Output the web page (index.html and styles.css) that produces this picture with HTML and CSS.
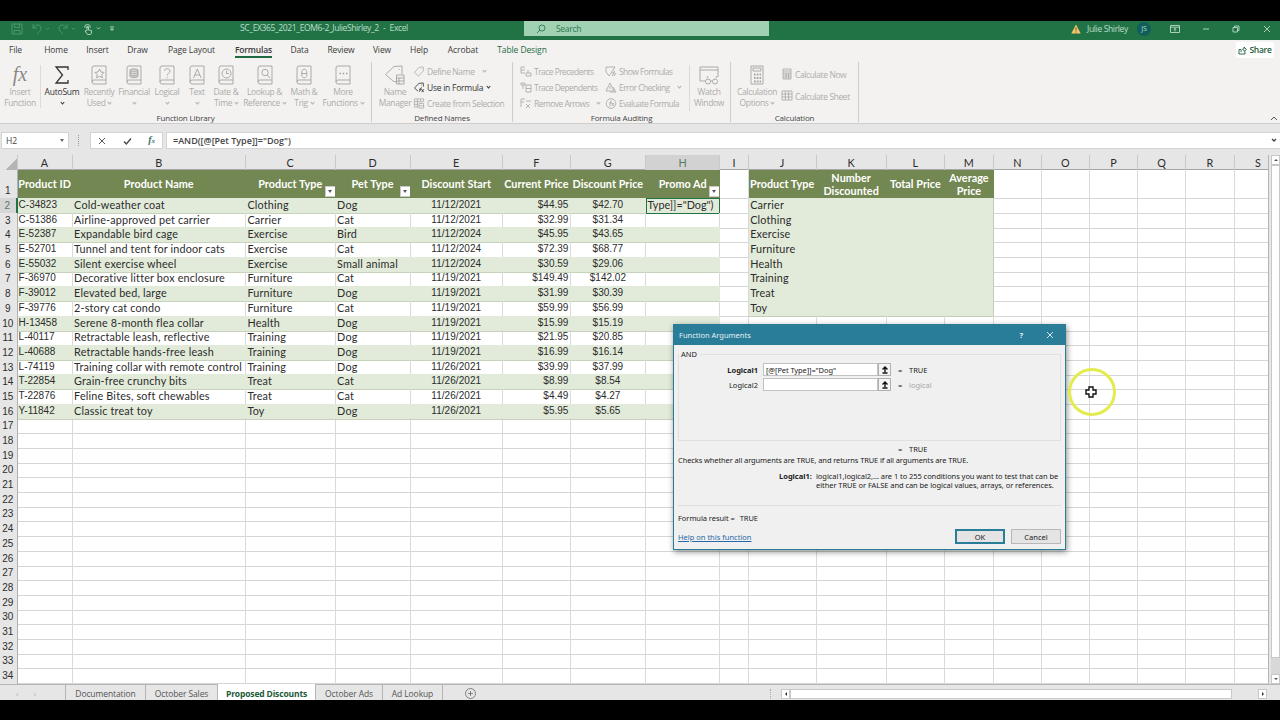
FILE: index.html
```html
<!DOCTYPE html>
<html lang="en">
<head>
  <meta charset="UTF-8" />
  <title>SC_EX365_2021_EOM6-2_JulieShirley_2 - Excel</title>
  <link rel="stylesheet" href="styles.css">
</head>
<body>
  <!-- shared icon shapes -->
  <svg class="defs" width="0" height="0">
    <symbol id="book" viewBox="0 0 16 20"><path d="M3 1h12v18H3a2 2 0 0 1-2-2V3a2 2 0 0 1 2-2zM1 17a2 2 0 0 1 2-2h12"/></symbol>
    <symbol id="tag" viewBox="0 0 12 12"><path d="M1 7l5-5.5 4.5-.5.5 4-5.500 6zM8.500 3.300h.5"/></symbol>
    <symbol id="sheet" viewBox="0 0 12 12"><path d="M1 1h10v9H1zM1 4h10M1 7h10M4.300 1v9M7.600 1v9"/></symbol>
    <symbol id="up" viewBox="0 0 8 8"><path d="M4 1v5M1.500 3.500L4 1l2.500 2.500M1.500 7h5"/></symbol>
  </svg>

  <div class="window">
    <header class="titlebar">
      <div class="quick">
        <svg width="12" height="12" viewBox="0 0 12 12"><path d="M1 1h10v10H1zM3.500 1v3.500h5V1M3 11V7.500h6V11"/></svg>
        <svg width="20" height="12" viewBox="0 0 20 12"><path d="M2 1v4h4M2 5c2-4 8-4 8 0 0 3-2 4-4 6M15 5l1.500 1.500L18 5"/></svg>
        <svg width="20" height="12" viewBox="0 0 20 12"><path d="M10 1v4H6M10 5C8 1 2 1 2 5c0 3 2 4 4 6M15 5l1.500 1.500L18 5"/></svg>
        <svg class="bright" width="20" height="12" viewBox="0 0 20 12"><path d="M1.500 4.500a3 3 0 1 1 6 0M3 5a1.500 1.500 0 1 1 3 0M4 7.500V4h1.500v3l3 .5V10l-1 1.500H4.500L2 8zM14 4.500L15.500 6 17 4.500"/></svg>
        <svg class="bright" width="8" height="12" viewBox="0 0 8 12"><path d="M1 4h4M1.500 6L3 7.500 4.500 6z"/></svg>
      </div>
      <div class="doc-name">SC_EX365_2021_EOM6-2_JulieShirley_2 &nbsp;-&nbsp; Excel</div>
      <div class="search">
        <svg width="10" height="10" viewBox="0 0 10 10"><circle cx="6" cy="4" r="3"/><path d="M4 6L1 9"/></svg>
        <span>Search</span>
      </div>
      <div class="account">
        <svg class="warn" width="10" height="10" viewBox="0 0 10 10"><path class="tri" d="M5 .5L9.700 9.500H.3z"/><path class="mark" d="M5 3.500v3M5 7.500v1"/></svg>
        <span class="user">Julie Shirley</span>
        <span class="avatar">JS</span>
        <svg class="w1" width="10" height="8" viewBox="0 0 10 8"><path d="M.5.5h9v7h-9zM.5 2.200h9M5 6.500V3.500M3.700 4.700L5 3.500l1.300 1.200"/></svg>
        <svg class="w2" width="8" height="8" viewBox="0 0 8 8"><path d="M1 4h6"/></svg>
        <svg class="w3" width="8" height="8" viewBox="0 0 8 8"><path d="M1 2.500h4.500V7H1zM2.500 2.500V1H7v4.500H5.500"/></svg>
        <svg class="w4" width="8" height="8" viewBox="0 0 8 8"><path d="M1 1l6 6M7 1L1 7"/></svg>
      </div>
    </header>

    <nav class="tabs">
      <a>File</a><a>Home</a><a>Insert</a><a>Draw</a><a>Page Layout</a><a class="active"><span>Formulas</span></a>
      <a>Data</a><a>Review</a><a>View</a><a>Help</a><a>Acrobat</a><a class="design">Table Design</a>
      <button class="share"><svg width="9" height="9" viewBox="0 0 9 9"><path d="M3 3.500H1v4.500h6V5.500M3 6c0-2 1-3 3-3V1l2.500 2.500L6 5.500V4"/></svg>Share</button>
    </nav>

    <section class="ribbon">
      <div class="group library">
        <div class="tools">
          <div class="big"><i class="fx">fx</i><span>Insert<br>Function</span></div>
          <div class="big on"><svg width="16" height="20" viewBox="0 0 16 20"><path class="thick" d="M14 5V2H2l6.500 8L2 18h12v-3"/></svg><span>AutoSum<br><b class="chev"></b></span></div>
          <div class="big"><svg width="16" height="20"><use href="#book"/><path d="M8.500 4l1.500 3 3 .4-2.200 2.200.6 3.200-2.900-1.500-2.900 1.500.6-3.200L4 7.400 7 7z"/></svg><span>Recently<br>Used <b class="chev"></b></span></div>
          <div class="big"><svg width="16" height="20"><use href="#book"/><path class="coins" d="M4 5c0-1.500 8-1.500 8 0v6.500c0 1.500-8 1.500-8 0zM4 5c0 1.500 8 1.500 8 0M4 7.200c0 1.500 8 1.500 8 0M4 9.400c0 1.500 8 1.500 8 0"/></svg><span>Financial<br><b class="chev"></b></span></div>
          <div class="big"><svg width="16" height="20"><use href="#book"/><path d="M5.500 6c0-3 5.500-3 5.500 0 0 2.500-2.800 2-2.800 4.500M8.200 12v1.200"/></svg><span>Logical<br><b class="chev"></b></span></div>
          <div class="big"><svg width="16" height="20"><use href="#book"/><path d="M4.500 13L8.300 4l3.800 9M5.800 10h5"/></svg><span>Text<br><b class="chev"></b></span></div>
          <div class="big"><svg width="16" height="20"><use href="#book"/><circle cx="8.500" cy="8.500" r="4.500"/><path d="M8.500 5.500v3H11"/></svg><span>Date &amp;<br>Time <b class="chev"></b></span></div>
          <div class="big"><svg width="16" height="20"><use href="#book"/><circle cx="8" cy="7.500" r="3.200"/><path d="M10.300 10l2.700 3"/></svg><span>Lookup &amp;<br>Reference <b class="chev"></b></span></div>
          <div class="big"><svg width="16" height="20"><use href="#book"/><ellipse cx="8.300" cy="8.500" rx="2.600" ry="4.300"/><path d="M5.700 8.500h5.200"/></svg><span>Math &amp;<br>Trig <b class="chev"></b></span></div>
          <div class="big"><svg width="16" height="20"><use href="#book"/><path class="thick" d="M4.500 8.500H6M7.700 8.500h1.500M11 8.500h1.500"/></svg><span>More<br>Functions <b class="chev"></b></span></div>
        </div>
        <h6>Function Library</h6>
      </div>

      <div class="group names">
        <div class="tools">
          <div class="big"><svg width="22" height="20" viewBox="0 0 22 20"><path d="M12 17l-3-1L1.500 9.500 10 1.500l8-.5v8M15 4v1M12.500 10H20v9h-7.500zM12.500 13H20M12.500 16H20M15 13v6"/></svg><span>Name<br>Manager</span></div>
          <div class="smalls">
            <div><svg width="12" height="11"><use href="#tag"/></svg>Define Name <b class="chev far"></b></div>
            <div class="on"><svg width="12" height="11" viewBox="0 0 12 12"><path d="M5 10L1 6.500 6 1.500 10.500 1l.5 4M8.500 3.300h.5M6 10.500c2 0 1-4.500 3-4.500M6 8h3M9 11l2-3M9 8l2 3"/></svg>Use in Formula <b class="chev"></b></div>
            <div><svg width="12" height="11" viewBox="0 0 12 12"><path d="M5 10H1V1h10v3M1 4h10M1 7h4M4.300 1v9M7.600 1v3M6 6h5v5H6zM6 8.500h5"/></svg>Create from Selection</div>
          </div>
        </div>
        <h6>Defined Names</h6>
      </div>

      <div class="group auditing">
        <div class="tools">
          <div class="smalls trace">
            <div><svg width="12" height="11" viewBox="0 0 12 11"><path d="M5 1H1v6h4M1 4h4M6 7h5v3H6zM8 4v3"/></svg>Trace Precedents</div>
            <div><svg width="12" height="11" viewBox="0 0 12 11"><path d="M1 1h4v2H1zM6 3h5v7H6zM6 6.500h5M3 3v4"/></svg>Trace Dependents</div>
            <div><svg width="12" height="11" viewBox="0 0 12 11"><path d="M1 9V1h4M1 4h3M6 3h5M6 6l4 4M10 6l-4 4"/></svg>Remove Arrows <b class="chev far"></b></div>
          </div>
          <div class="smalls">
            <div><svg width="12" height="11" viewBox="0 0 12 11"><path d="M1 6V1h9L4 10 1 6M7 10c2 0 1-5 3-5M7 7h3M9 10l2-3"/></svg>Show Formulas</div>
            <div><svg width="12" height="11" viewBox="0 0 12 11"><path d="M5 1l4 8H1zM5 4v3M8 5l3 5H5"/></svg>Error Checking <b class="chev far"></b></div>
            <div><svg width="12" height="11" viewBox="0 0 12 11"><circle cx="6" cy="5.500" r="4.800"/><path d="M4 8.500c1.500 0 1-6 3-6M4 5h3M6.500 8l2.500-3M7 5l2 3"/></svg>Evaluate Formula</div>
          </div>
          <div class="big watch"><svg width="20" height="20" viewBox="0 0 20 20"><path d="M7 16H1V2h18v10M1 5h18"/><circle cx="9" cy="16.500" r="2.500"/><circle cx="16" cy="16.500" r="2.500"/><path d="M11.500 16h2M8 13l1-2M17 13l1-2"/></svg><span>Watch<br>Window</span></div>
        </div>
        <h6>Formula Auditing</h6>
      </div>

      <div class="group calc">
        <div class="tools">
          <div class="big"><svg width="14" height="20" viewBox="0 0 14 20"><path d="M1 1h12v18H1zM3 3h8v3H3z"/><path class="dots" d="M4 9.500h7M4 13h7M4 16.500h7"/></svg><span>Calculation<br>Options <b class="chev"></b></span></div>
          <div class="smalls two">
            <div><svg width="12" height="12" viewBox="0 0 12 12"><path d="M2 1h8v10H2zM2 3h8M2 5h8M2 7h8M2 9h8M5 5v6M7.500 5v6"/></svg>Calculate Now</div>
            <div><svg width="12" height="12"><use href="#sheet"/></svg>Calculate Sheet</div>
          </div>
        </div>
        <h6>Calculation</h6>
      </div>
      <svg class="collapse" width="8" height="5" viewBox="0 0 8 5"><path d="M1 4l3-3 3 3"/></svg>
    </section>

    <div class="formula-bar">
      <div class="name-box">H2<b class="arrow"></b></div>
      <div class="grip"></div>
      <div class="entry">
        <svg width="8" height="8" viewBox="0 0 8 8"><path d="M1 1l6 6M7 1L1 7"/></svg>
        <svg width="9" height="8" viewBox="0 0 9 8"><path class="thick" d="M1 4.500L3.300 7 8 1.500"/></svg>
        <i>f<small>x</small></i>
      </div>
      <div class="formula">=AND([@[Pet Type]]="Dog")<svg width="6" height="5" viewBox="0 0 6 5"><path class="thick" d="M1 1l2 2 2-2"/></svg></div>
    </div>

    <main class="sheet">
      <div class="grid" id="grid"></div>
      <div class="vscroll"><b class="btn-up"></b><span></span><b class="btn-down"></b></div>
    </main>

    <footer class="sheet-tabs">
      <div class="nav-arrows"><span>‹</span><span>›</span></div>
      <a>Documentation</a><a>October Sales</a><a class="active">Proposed Discounts</a><a>October Ads</a><a>Ad Lookup</a>
      <svg class="add" width="11" height="11" viewBox="0 0 11 11"><circle cx="5.500" cy="5.500" r="5"/><path d="M5.500 3v5M3 5.500h5"/></svg>
      <div class="hscroll"><b class="btn-left"></b><span></span><b class="btn-right"></b></div>
    </footer>
  </div>

  <div class="dialog">
    <div class="dialog-title"><span>Function Arguments</span><b>?</b>
      <svg width="8" height="8" viewBox="0 0 8 8"><path d="M1 1l6 6M7 1L1 7"/></svg>
    </div>
    <div class="dialog-body">
      <fieldset>
        <legend>AND</legend>
        <div class="arg"><label class="strong">Logical1</label><div class="field">[@[Pet Type]]="Dog"</div><button><svg width="8" height="8"><use href="#up"/></svg></button><em>=</em><span>TRUE</span></div>
        <div class="arg"><label>Logical2</label><div class="field"></div><button><svg width="8" height="8"><use href="#up"/></svg></button><em>=</em><span class="hint">logical</span></div>
      </fieldset>
      <div class="result"><em>=</em><span>TRUE</span></div>
      <p class="about">Checks whether all arguments are TRUE, and returns TRUE if all arguments are TRUE.</p>
      <div class="help"><strong>Logical1:</strong><p>logical1,logical2,... are 1 to 255 conditions you want to test that can be<br>either TRUE or FALSE and can be logical values, arrays, or references.</p></div>
      <div class="final">Formula result = <span>TRUE</span></div>
      <div class="actions"><a>Help on this function</a><button class="ok">OK</button><button>Cancel</button></div>
    </div>
  </div>

  <svg class="pointer" width="50" height="50" viewBox="0 0 50 50">
    <circle cx="25" cy="25" r="22.500"/>
    <path d="M22 20h4v3h3v4h-3v3h-4v-3h-3v-4h3z"/>
  </svg>

  <script>
    const cols = 'ABCDEFGHIJKLMNOPQRS'.split('');
    const heads = {
      A: 'Product ID', B: 'Product Name', C: 'Product Type', D: 'Pet Type', E: 'Discount Start',
      F: 'Current Price', G: 'Discount Price', H: 'Promo Ad',
      J: 'Product Type', K: 'Number<br>Discounted', L: 'Total Price', M: 'Average<br>Price'
    };
    const products = [
      ['C-34823', 'Cold-weather coat', 'Clothing', 'Dog', '11/12/2021', '$44.95', '$42.70', 'Type]]="Dog")'],
      ['C-51386', 'Airline-approved pet carrier', 'Carrier', 'Cat', '11/12/2021', '$32.99', '$31.34'],
      ['E-52387', 'Expandable bird cage', 'Exercise', 'Bird', '11/12/2024', '$45.95', '$43.65'],
      ['E-52701', 'Tunnel and tent for indoor cats', 'Exercise', 'Cat', '11/12/2024', '$72.39', '$68.77'],
      ['E-55032', 'Silent exercise wheel', 'Exercise', 'Small animal', '11/12/2024', '$30.59', '$29.06'],
      ['F-36970', 'Decorative litter box enclosure', 'Furniture', 'Cat', '11/19/2021', '$149.49', '$142.02'],
      ['F-39012', 'Elevated bed, large', 'Furniture', 'Dog', '11/19/2021', '$31.99', '$30.39'],
      ['F-39776', '2-story cat condo', 'Furniture', 'Cat', '11/19/2021', '$59.99', '$56.99'],
      ['H-13458', 'Serene 8-month flea collar', 'Health', 'Dog', '11/19/2021', '$15.99', '$15.19'],
      ['L-40117', 'Retractable leash, reflective', 'Training', 'Dog', '11/19/2021', '$21.95', '$20.85'],
      ['L-40688', 'Retractable hands-free leash', 'Training', 'Dog', '11/19/2021', '$16.99', '$16.14'],
      ['L-74119', 'Training collar with remote control', 'Training', 'Dog', '11/26/2021', '$39.99', '$37.99'],
      ['T-22854', 'Grain-free crunchy bits', 'Treat', 'Cat', '11/26/2021', '$8.99', '$8.54'],
      ['T-22876', 'Feline Bites, soft chewables', 'Treat', 'Cat', '11/26/2021', '$4.49', '$4.27'],
      ['Y-11842', 'Classic treat toy', 'Toy', 'Dog', '11/26/2021', '$5.95', '$5.65']
    ];
    const types = ['Carrier', 'Clothing', 'Exercise', 'Furniture', 'Health', 'Training', 'Treat', 'Toy'];

    let html = '<div class="row letters"><div class="corner"></div>';
    cols.forEach(c => html += `<div class="${c === 'H' ? 'picked' : ''}">${c}</div>`);
    html += '</div>';

    for (let r = 1; r <= 35; r++) {
      html += `<div class="row ${r === 1 ? 'first' : ''}"><div class="num ${r === 2 ? 'picked' : ''}">${r === 35 ? '' : r}</div>`;
      cols.forEach((c, i) => {
        let cls = 'cell c' + c;
        let text = '';
        if (r === 1 && heads[c]) {
          cls += ' head';
          text = `<span>${heads[c]}</span>`;
          if ('CDH'.includes(c)) text += '<b class="filter"></b>';
        } else if (r > 1 && r <= 16 && i < 8) {
          cls += r % 2 ? ' plain' : ' band';
          text = products[r - 2][i] || '';
          if (r === 2 && c === 'H') cls += ' selected';
        } else if (r > 1 && r <= 9 && i > 8 && i < 13) {
          cls += ' summary';
          if (c === 'J') text = types[r - 2];
        }
        html += `<div class="${cls}">${text}</div>`;
      });
      html += '</div>';
    }
    document.getElementById('grid').innerHTML = html;
  </script>
</body>
</html>
```
FILE: styles.css
```css
* {
  box-sizing: border-box;
  margin: 0;
  padding: 0;
}

body {
  width: 1280px;
  height: 720px;
  overflow: hidden;
  background: #000;
  font-family: "Open Sans", "Noto Sans", sans-serif;
  font-size: 8.5px;
  color: #333;
  position: relative;
}

svg {
  fill: none;
  stroke: currentColor;
  stroke-width: 0.9;
  flex: none;
}

.defs {
  position: absolute;
}

.thick {
  stroke-width: 1.3;
}

button {
  font: inherit;
  color: inherit;
}

.window {
  margin-top: 21px;
  height: 679px;
  background: #e6e6e6;
  display: flex;
  flex-direction: column;
  overflow: hidden;
}

/* title bar */
.titlebar {
  height: 19px;
  flex: none;
  background: #217346;
  display: flex;
  align-items: flex-start;
  color: #b9dcc6;
}

.quick {
  width: 240px;
  display: flex;
  padding: 2px 0 0 11px;
  gap: 8px;
  color: #4f9a6d;
}

.quick svg + svg + svg {
  margin-left: -2px;
}

.quick .bright {
  color: #b9dcc6;
}

.doc-name {
  width: 284px;
  line-height: 14px;
  letter-spacing: -0.42px;
  word-spacing: 0.3px;
  white-space: nowrap;
  font-size: 8.6px;
}

.search {
  width: 245px;
  height: 15px;
  background: #a0d1b3;
  color: #2c7a50;
  display: flex;
  align-items: center;
  gap: 10px;
  padding-left: 12px;
  letter-spacing: -0.3px;
}

.account {
  flex: 1;
  display: flex;
  align-items: center;
  height: 15px;
  padding-left: 302px;
}

.tri {
  fill: #f2c56b;
  stroke: none;
}

.mark {
  stroke: #5a4a1c;
}

.user {
  width: 50px;
  margin-left: 6px;
  white-space: nowrap;
  letter-spacing: -0.35px;
}

.avatar {
  width: 14px;
  height: 14px;
  border-radius: 50%;
  background: #0f5e5c;
  font-size: 7px;
  line-height: 14px;
  text-align: center;
}

.w1 { margin-left: 19px; }
.w2 { margin-left: 22px; }
.w3 { margin-left: 22px; }
.w4 { margin-left: 23px; }

/* ribbon tabs */
.tabs {
  height: 21px;
  flex: none;
  background: #f3f2f1;
  display: grid;
  grid-template-columns: 31px 50px 33px 47px 61px 63px 29px 54px 28px 46px 42px 76px 1fr;
  justify-items: center;
  line-height: 20px;
  letter-spacing: -0.1px;
  white-space: nowrap;
  color: #3b3a39;
}

.tabs .active span {
  display: block;
  height: 18px;
  border-bottom: 2px solid #1e6b41;
  font-weight: 600;
  letter-spacing: -0.15px;
}

.tabs .design {
  color: #1e6b41;
}

.share {
  justify-self: end;
  width: 38px;
  height: 16px;
  margin: 2px 6px 0 0;
  background: #fff;
  border: none;
  border-radius: 2px;
  color: #1e5c3a;
  font-weight: 600;
  letter-spacing: -0.3px;
  display: flex;
  align-items: center;
  justify-content: center;
  gap: 2px;
}

/* ribbon */
.ribbon {
  height: 63px;
  flex: none;
  background: #f3f2f1;
  border-bottom: 1px solid #d0cecc;
  display: flex;
  color: #aeacaa;
  position: relative;
}

.group {
  position: relative;
  display: flex;
  flex-direction: column;
  justify-content: space-between;
  border-right: 1px solid #cfcdcb;
  height: 60px;
  margin-top: 1px;
}

.group h6 {
  font-size: 8px;
  line-height: 9px;
  font-weight: 400;
  color: #444;
  text-align: center;
  letter-spacing: -0.15px;
}

.tools {
  display: flex;
  padding-top: 3px;
}

.big {
  display: flex;
  flex-direction: column;
  align-items: center;
  text-align: center;
  white-space: nowrap;
  line-height: 10.7px;
  flex: none;
}

.big svg {
  color: #a3a1a0;
}

.big > span {
  margin-top: 2px;
  letter-spacing: -0.35px;
}

.fx {
  height: 20px;
  font: italic 20px/18px "Liberation Serif", serif;
  color: #8a8886;
}

.coins {
  fill: #cfcdcc;
}

.on,
.on svg {
  color: #333;
}

.library .on > span {
  letter-spacing: -0.2px;
}

.library { width: 372px; }
.names { width: 141px; }
.auditing { width: 218px; }
.calc { width: 128px; }

.library .tools {
  display: grid;
  grid-template-columns: 41px 42px 32px 38px 28px 32px 26px 51px 28px 50px;
}

.library .big:first-child {
  border-right: 1px solid #dddbd9;
}

.names .big {
  width: 46px;
}

.chev {
  display: inline-block;
  width: 3px;
  height: 3px;
  border: solid currentColor;
  border-width: 0 1px 1px 0;
  transform: rotate(45deg);
  margin: 0 0 2px 1px;
}

.smalls {
  display: flex;
  flex-direction: column;
  white-space: nowrap;
  letter-spacing: -0.4px;
}

.smalls div {
  height: 16px;
  display: flex;
  align-items: center;
  gap: 2px;
}

.smalls .on {
  letter-spacing: -0.25px;
}

.smalls .chev {
  margin-left: 2px;
}

.smalls .far {
  margin-left: 6px;
}

.names .smalls,
.auditing .smalls {
  margin-top: -2px;
}

.names .smalls {
  margin-left: -5px;
}

.auditing .trace {
  width: 85px;
}

.auditing .smalls {
  margin-left: 7px;
  letter-spacing: -0.55px;
}

.auditing .smalls + .smalls {
  margin-left: 0;
  width: 84px;
}

.watch {
  width: 39px;
  border-left: 1px solid #dddbd9;
}

.calc .big {
  width: 52px;
}

.calc .two {
  gap: 6px;
  margin: 1px 0 0 -2px;
}

.dots {
  stroke-width: 1.8;
  stroke-dasharray: 1.6 1.2;
}

.collapse {
  position: absolute;
  right: 2px;
  bottom: 2px;
  color: #444;
}

/* formula bar */
.formula-bar {
  height: 31px;
  flex: none;
  padding: 8px 0 6px 1px;
  display: flex;
  color: #444;
}

.name-box {
  width: 68px;
  background: #fff;
  border: 1px solid #d4d4d4;
  padding: 0 4px;
  line-height: 15px;
  display: flex;
  justify-content: space-between;
  align-items: center;
}

.arrow {
  border: 2.5px solid transparent;
  border-top: 3px solid #666;
  border-bottom: none;
}

.grip {
  width: 2px;
  margin: 3px 10px 3px 9px;
  border-left: 1px dotted #999;
}

.entry {
  width: 73px;
  background: #fff;
  border: 1px solid #d4d4d4;
  display: flex;
  align-items: center;
  justify-content: space-between;
  padding: 0 7px;
}

.entry i {
  font: italic bold 10px/14px "Liberation Serif", serif;
  color: #3b6f6a;
}

.entry small {
  font-size: 7px;
}

.formula {
  flex: 1;
  margin-left: 3px;
  background: #fff;
  border: 1px solid #d4d4d4;
  border-right: none;
  padding: 0 3px 0 6px;
  display: flex;
  justify-content: space-between;
  align-items: center;
  font-size: 9px;
  font-weight: 600;
}

/* worksheet */
.sheet {
  height: 530px;
  flex: none;
  display: flex;
  overflow: hidden;
  border-bottom: 1px solid #b5b5b5;
}

.grid {
  width: 1269px;
  overflow: hidden;
  background: #fff;
  border-right: 1px solid #b5b5b5;
  font-family: Lato, "Open Sans", sans-serif;
  font-size: 10.8px;
  letter-spacing: 0.18px;
  color: #2c2c2c;
}

.row {
  display: grid;
  grid-template-columns: 17.6px 55px 173.300px 89.700px 75px 92.300px 68px 75px 74.600px 28.200px 68px 70px 58.400px 48.800px 48.100px 48.100px 48.100px 48.200px 48.200px 48px;
  height: 14.7px;
  white-space: nowrap;
}

.first {
  height: 28px;
}

.letters {
  height: 15px;
  background: #e6e6e6;
  border-bottom: 1px solid #a6a6a6;
  text-align: center;
  line-height: 15px;
}

.letters div {
  border-right: 1px solid #c9c9c9;
}

.letters .picked {
  background: #d2d2d2;
  color: #57795f;
  border-bottom: 1px solid #217346;
}

.letters .corner {
  background: linear-gradient(135deg, #e6e6e6 62%, #b5b5b5 63%);
}

.num {
  background: #e6e6e6;
  border-right: 1px solid #b0b0b0;
  border-bottom: 1px solid #cfcfcf;
  text-align: center;
  font-family: "Liberation Sans", sans-serif;
  font-size: 10px;
  letter-spacing: 0;
  line-height: 15px;
  padding-right: 1px;
}

.num.picked {
  background: #d6d6d6;
  color: #57795f;
  border-right: 2px solid #217346;
}

.first .num {
  padding-top: 13px;
}

.cell {
  border-right: 1px solid #dadada;
  border-bottom: 1px solid #d6d6d6;
  line-height: 14.7px;
  padding: 0 1.500px;
  overflow: hidden;
  position: relative;
}

/* number columns are set narrower than the text ones */
.cA,
.cE,
.cF,
.cG {
  font-family: "Liberation Sans", sans-serif;
  font-size: 10px;
  letter-spacing: 0;
}

.cE,
.cG {
  text-align: center;
}

.cE {
  letter-spacing: 0.05px;
}

.cF {
  text-align: right;
}

.cA {
  padding-left: 1px;
}

.band {
  background: #e2ebda;
  border-right-color: #e2ebda;
  border-bottom-color: #c6d3ba;
}

.plain {
  border-bottom-color: #c6d3ba;
}

.summary {
  background: #e2ebda;
  border-right-color: #e2ebda;
  border-bottom-color: #c3ceb9;
}

.cM.summary {
  border-right-color: #c3ceb9;
}

.head {
  background: #738752;
  border-color: #738752;
  color: #fff;
  font-family: Lato, "Open Sans", sans-serif;
  font-size: 10.8px;
  font-weight: 700;
  letter-spacing: 0.05px;
  display: flex;
  align-items: center;
  justify-content: center;
  line-height: 13px;
  text-align: center;
  padding: 0 0 1px;
}

.filter {
  position: absolute;
  right: -1px;
  bottom: 1px;
  width: 11px;
  height: 11px;
  background: #fff;
  border: 1px solid #c8c8c8;
}

.filter::after {
  content: "";
  position: absolute;
  left: 2px;
  top: 3px;
  border: 2.500px solid transparent;
  border-top: 3px solid #556;
  border-bottom: none;
}

.selected {
  outline: 1.5px solid #217346;
  outline-offset: -1px;
  border-bottom: 1px solid #217346;
  letter-spacing: 0;
}

/* scroll bars */
.vscroll {
  flex: 1;
  margin-left: 2px;
  background: #d8d8d8;
  display: flex;
  flex-direction: column;
}

.vscroll b,
.hscroll b {
  width: 9px;
  height: 10px;
  background: #fff;
  border: 1px solid #c8c8c8;
  display: grid;
  place-items: center;
}

.vscroll b::after,
.hscroll b::after {
  content: "";
  border: 2px solid transparent;
}

.btn-up::after { border-bottom-color: #555 !important; border-top: none !important; }
.btn-down::after { border-top-color: #555 !important; border-bottom: none !important; }
.btn-left::after { border-right-color: #333 !important; border-left: none !important; }
.btn-right::after { border-left-color: #333 !important; border-right: none !important; }

.vscroll span {
  height: 493px;
  background: #fff;
  border: 1px solid #c8c8c8;
  margin-bottom: auto;
}

/* sheet tabs */
.sheet-tabs {
  flex: 1;
  display: flex;
  align-items: stretch;
  line-height: 18px;
  color: #555;
  white-space: nowrap;
}

.sheet-tabs a {
  text-align: center;
  border-right: 1px solid #b5b5b5;
  letter-spacing: -0.1px;
}

.sheet-tabs a:nth-of-type(1) { width: 80px; }
.sheet-tabs a:nth-of-type(2) { width: 72px; }
.sheet-tabs a:nth-of-type(3) { width: 98px; }
.sheet-tabs a:nth-of-type(4) { width: 67px; }
.sheet-tabs a:nth-of-type(5) { width: 60px; }

.sheet-tabs .active {
  background: #fff;
  color: #1c5a38;
  font-weight: 700;
  letter-spacing: -0.15px;
  margin-top: -1px;
  padding-top: 1px;
}

.nav-arrows {
  width: 66px;
  border-right: 1px solid #b5b5b5;
  padding-left: 16px;
  display: flex;
  gap: 15px;
  color: #b5b5b5;
}

.add {
  margin: 3px 0 0 22px;
  color: #777;
}

.hscroll {
  margin: 4px 0 0 294px;
  border-left: 1px dotted #aaa;
  padding-left: 10px;
  display: flex;
}

.hscroll span {
  width: 442px;
  height: 10px;
  background: #fff;
  border: 1px solid #c8c8c8;
  margin-right: 26px;
}

/* function arguments dialog */
.dialog {
  position: absolute;
  left: 673px;
  top: 324px;
  width: 393px;
  height: 226px;
  background: #f0f0f0;
  border: 1px solid #2a7b96;
  box-shadow: 1px 2px 6px rgba(0, 0, 0, 0.45);
  font-family: "Noto Sans", "Open Sans", sans-serif;
  font-size: 7.5px;
  color: #222;
}

.dialog-title {
  height: 20px;
  background: #2a7d99;
  color: #e3f1f5;
  display: flex;
  align-items: center;
  padding: 0 11px 0 5px;
}

.dialog-title span {
  flex: 1;
}

.dialog-title b {
  margin-right: 23px;
}

.dialog-body {
  padding: 0 4px;
}

.dialog-body em {
  font-style: normal;
  width: 11px;
}

fieldset {
  height: 92px;
  margin-top: 4px;
  border: 1px solid #e0e0e0;
}

legend {
  padding: 0 3px 0 2px;
  height: 10px;
  line-height: 10px;
}

.arg {
  display: flex;
  align-items: center;
  height: 13px;
  margin: 4px 0 2px;
}

.arg + .arg {
  margin-top: 0;
}

.arg label {
  width: 79px;
  text-align: right;
  margin-right: 5px;
}

.strong {
  font-weight: 700;
}

.field {
  width: 115px;
  height: 13px;
  background: #fff;
  border: 1px solid #c2c2c2;
  padding-left: 2px;
  line-height: 12px;
  letter-spacing: -0.1px;
}

.arg button {
  width: 13px;
  height: 13px;
  border: 1px solid #b0b0b0;
  background: #f4f4f4;
  display: grid;
  place-items: center;
  color: #111;
  margin-right: 7px;
}

.arg button svg {
  stroke-width: 1.4;
}

.hint {
  color: #a8a8a8;
}

.result {
  display: flex;
  margin: 3px 0 0 220px;
  line-height: 11px;
}

.about {
  line-height: 11px;
  white-space: nowrap;
  letter-spacing: -0.11px;
}

.help {
  height: 39px;
  display: flex;
  margin-top: 6px;
  padding-left: 101px;
  line-height: 9px;
  border-bottom: 1px solid #dedede;
  white-space: nowrap;
}

.help strong {
  width: 37px;
}

.help p {
  letter-spacing: -0.06px;
}

.final {
  margin-top: 8px;
  line-height: 11px;
  letter-spacing: -0.05px;
}

.final span {
  margin-left: 3px;
}

.help {
  height: 34px;
}

.final {
  margin-top: 7px;
}

.actions {
  display: flex;
  align-items: center;
  margin-top: 5px;
}

.actions a {
  color: #2569a8;
  text-decoration: underline;
  flex: 1;
}

.actions button {
  width: 50px;
  height: 15px;
  background: #e4e4e4;
  border: 1px solid #b8b8b8;
}

.actions .ok {
  border: 2px solid #2a7d99;
  margin-right: 6px;
}

/* mouse pointer with highlight ring */
.pointer {
  position: absolute;
  left: 1067px;
  top: 367px;
}

.pointer circle {
  stroke: #e2ec4e;
  stroke-width: 3;
}

.pointer path {
  fill: #fff;
  stroke: #111;
  stroke-width: 1.4;
}
```
